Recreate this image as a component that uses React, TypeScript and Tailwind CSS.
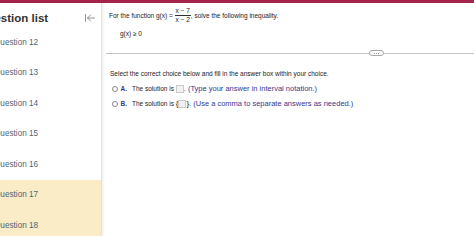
import { ArrowLeftToLine } from "lucide-react";

const questions = [12, 13, 14, 15, 16, 17, 18];
const active = [17, 18];

function AnswerBox() {
	return <span className="inline-block h-[8px] w-[8px] border border-[#c9c9c9] bg-[#f1f1f1]" />;
}

function Radio() {
	return <span className="inline-block h-[6px] w-[6px] rounded-full border border-[#8a8a8a] bg-white" />;
}

export default function App() {
	return (
		<div className="flex h-[236px] w-[474px] flex-col overflow-hidden bg-white font-['Liberation_Sans',Arial,sans-serif] text-[#222]">
			<div className="h-[3px] shrink-0 bg-[#a6244c]" />
			<div className="flex min-h-0 flex-1">
				{/* question list */}
				<aside className="flex w-[102px] shrink-0 flex-col overflow-hidden border-r border-[#e2e2e2] shadow-[1px_0_3px_rgba(0,0,0,0.08)]">
					<div className="flex h-[24.5px] shrink-0 items-start justify-between pt-[9px] pr-[5px]">
						<span className="ml-[-21.5px] text-[11.5px] leading-[12px] font-semibold whitespace-nowrap text-[#333]">
							Question list
						</span>
						<ArrowLeftToLine className="h-[12px] w-[12px] text-[#666]" strokeWidth={1.4} />
					</div>
					{questions.map((n) => (
						<div
							key={n}
							className={`flex h-[30.5px] shrink-0 items-center ${active.includes(n) ? "bg-[#f9ecc7]" : ""}`}
						>
							<span className="ml-[-6px] text-[8.2px] whitespace-nowrap text-[#4f6476]">Question {n}</span>
						</div>
					))}
				</aside>

				{/* question body */}
				<main className="flex min-w-0 flex-1 flex-col pt-[4px] pl-[4px] text-[6.5px] text-[#1a1a1a]">
					<div className="flex items-center pl-[3px] whitespace-nowrap">
						<span>For the function g(x) =&nbsp;</span>
						<span className="flex flex-col items-center">
							<span className="px-[1px] leading-[8px]">x − 7</span>
							<span className="h-px w-full bg-[#333]" />
							<span className="px-[1px] leading-[8px]">x − 2</span>
						</span>
						<span>, solve the following inequality.</span>
					</div>
					<div className="mt-[6px] pl-[14px] leading-[8px]">g(x) ≥ 0</div>

					<div className="mt-[12px] flex items-center">
						<div className="h-px w-[263px] bg-[#c4c4c4]" />
						<div className="flex h-[6px] w-[15px] items-center justify-center gap-[1px] rounded-full border border-[#a9a9a9] bg-white">
							<span className="h-[1px] w-[1px] rounded-full bg-[#777]" />
							<span className="h-[1px] w-[1px] rounded-full bg-[#777]" />
							<span className="h-[1px] w-[1px] rounded-full bg-[#777]" />
						</div>
						<div className="h-px flex-1 bg-[#c4c4c4]" />
					</div>

					<div className="mt-[13.5px] pl-[4px] leading-[8px] whitespace-nowrap">
						Select the correct choice below and fill in the answer box within your choice.
					</div>

					<div className="mt-[7px] flex flex-col gap-[6px] pl-[5.5px] whitespace-nowrap">
						<div className="flex h-[9px] items-center">
							<Radio />
							<span className="ml-[3px] font-semibold text-[#34388f]">A.</span>
							<span className="ml-[5px]">The solution is&nbsp;</span>
							<AnswerBox />
							<span className="text-[7.5px] text-[#34388f]">. (Type your answer in interval notation.)</span>
						</div>
						<div className="flex h-[9px] items-center">
							<Radio />
							<span className="ml-[3px] font-semibold text-[#34388f]">B.</span>
							<span className="ml-[5px]">The solution is&nbsp;</span>
							<span className="text-[8px] leading-[8px]">{"{"}</span>
							<AnswerBox />
							<span className="text-[8px] leading-[8px]">{"}"}</span>
							<span className="text-[7.5px] text-[#34388f]">. (Use a comma to separate answers as needed.)</span>
						</div>
					</div>
				</main>
			</div>
		</div>
	);
}
